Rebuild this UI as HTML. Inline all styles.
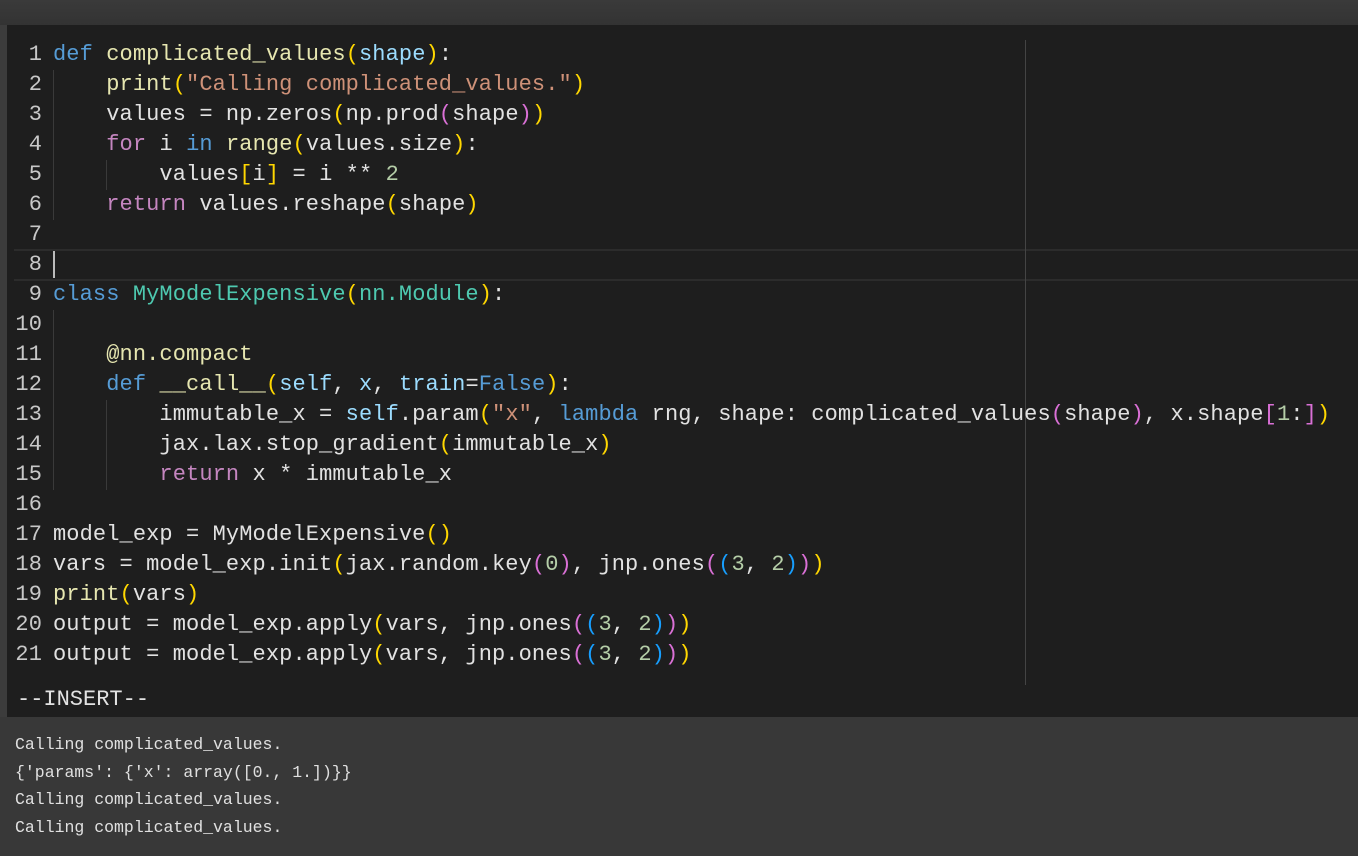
<!DOCTYPE html>
<html><head><meta charset="utf-8"><style>
body{margin:0;width:1358px;height:856px;background:#383838;overflow:hidden;font-family:"Liberation Mono",monospace;}
#top{position:absolute;left:0;top:0;width:1358px;height:25px;background:linear-gradient(#3a3a3a,#333);}
#ed{position:absolute;left:7px;top:25px;width:1351px;height:692px;background:#1e1e1e;}
#strip{position:absolute;left:0;top:25px;width:7px;height:692px;background:#3c3c3c;}
.code{position:absolute;left:0;top:15px;font-size:22px;letter-spacing:0.1px;line-height:30px;color:#e2e2e2;white-space:pre;}
.ln{display:inline-block;width:35px;text-align:right;color:#c8c8c8;margin-right:11px;}
.k{color:#569cd6}.f{color:#e6e6b0}.s{color:#ce9178}.p{color:#c586c0}.n{color:#b5cea8}.c{color:#4ec9b0}.v{color:#9cdcfe}
.b1{color:#ffd700}.b2{color:#da70d6}.b3{color:#179fff}
#vl{position:absolute;left:1018px;top:15px;width:1px;height:645px;background:#444;}
#cur{position:absolute;left:7px;top:224px;width:1351px;height:28px;border-top:2px solid #2c2c2c;border-bottom:2px solid #2c2c2c;}
#caret{position:absolute;left:46px;top:226px;width:2px;height:27px;background:#bbb;}
.g{position:absolute;width:1px;background:#3a3a3a;}
#ins{position:absolute;left:10px;top:660px;font-size:22px;color:#e2e2e2;line-height:30px;}
#out{position:absolute;left:15px;top:731px;font-size:16.5px;line-height:27.5px;color:#e0e0e0;white-space:pre;}
</style></head><body>
<div id="top"></div><div id="strip"></div>
<div id="ed">
<div id="cur"></div><div id="vl"></div>
<div class="g" style="left:46px;top:45px;height:150px"></div>
<div class="g" style="left:99px;top:135px;height:30px"></div>
<div class="g" style="left:46px;top:285px;height:180px"></div>
<div class="g" style="left:99px;top:375px;height:90px"></div>
<div class="code"><span class="ln">1</span><span class="k">def</span> <span class="f">complicated_values</span><span class="b1">(</span><span class="v">shape</span><span class="b1">)</span>:
<span class="ln">2</span>    <span class="f">print</span><span class="b1">(</span><span class="s">"Calling complicated_values."</span><span class="b1">)</span>
<span class="ln">3</span>    values = np.zeros<span class="b1">(</span>np.prod<span class="b2">(</span>shape<span class="b2">)</span><span class="b1">)</span>
<span class="ln">4</span>    <span class="p">for</span> i <span class="k">in</span> <span class="f">range</span><span class="b1">(</span>values.size<span class="b1">)</span>:
<span class="ln">5</span>        values<span class="b1">[</span>i<span class="b1">]</span> = i ** <span class="n">2</span>
<span class="ln">6</span>    <span class="p">return</span> values.reshape<span class="b1">(</span>shape<span class="b1">)</span>
<span class="ln">7</span>
<span class="ln">8</span>
<span class="ln">9</span><span class="k">class</span> <span class="c">MyModelExpensive</span><span class="b1">(</span><span class="c">nn.Module</span><span class="b1">)</span>:
<span class="ln">10</span>
<span class="ln">11</span>    <span class="f">@nn.compact</span>
<span class="ln">12</span>    <span class="k">def</span> <span class="f">__call__</span><span class="b1">(</span><span class="v">self</span>, <span class="v">x</span>, <span class="v">train</span>=<span class="k">False</span><span class="b1">)</span>:
<span class="ln">13</span>        immutable_x = <span class="v">self</span>.param<span class="b1">(</span><span class="s">"x"</span>, <span class="k">lambda</span> rng, shape: complicated_values<span class="b2">(</span>shape<span class="b2">)</span>, x.shape<span class="b2">[</span><span class="n">1</span>:<span class="b2">]</span><span class="b1">)</span>
<span class="ln">14</span>        jax.lax.stop_gradient<span class="b1">(</span>immutable_x<span class="b1">)</span>
<span class="ln">15</span>        <span class="p">return</span> x * immutable_x
<span class="ln">16</span>
<span class="ln">17</span>model_exp = MyModelExpensive<span class="b1">()</span>
<span class="ln">18</span>vars = model_exp.init<span class="b1">(</span>jax.random.key<span class="b2">(</span><span class="n">0</span><span class="b2">)</span>, jnp.ones<span class="b2">(</span><span class="b3">(</span><span class="n">3</span>, <span class="n">2</span><span class="b3">)</span><span class="b2">)</span><span class="b1">)</span>
<span class="ln">19</span><span class="f">print</span><span class="b1">(</span>vars<span class="b1">)</span>
<span class="ln">20</span>output = model_exp.apply<span class="b1">(</span>vars, jnp.ones<span class="b2">(</span><span class="b3">(</span><span class="n">3</span>, <span class="n">2</span><span class="b3">)</span><span class="b2">)</span><span class="b1">)</span>
<span class="ln">21</span>output = model_exp.apply<span class="b1">(</span>vars, jnp.ones<span class="b2">(</span><span class="b3">(</span><span class="n">3</span>, <span class="n">2</span><span class="b3">)</span><span class="b2">)</span><span class="b1">)</span></div>
<div id="caret"></div>
<div id="ins">--INSERT--</div>
</div>
<div id="out">Calling complicated_values.
{'params': {'x': array([0., 1.])}}
Calling complicated_values.
Calling complicated_values.</div>
</body></html>
